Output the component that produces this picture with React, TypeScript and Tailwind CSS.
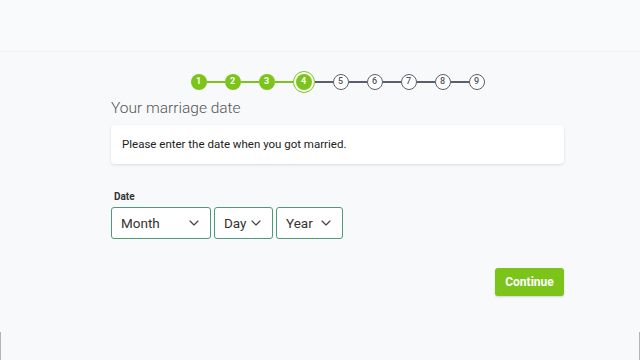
import { ChevronDown } from "lucide-react";

const steps = [1, 2, 3, 4, 5, 6, 7, 8, 9];
const current = 4;

const Step = ({ n }: { n: number }) => {
    if (n === current) {
        return (
            <div className="w-[22px] h-[22px] rounded-full border-[1.5px] border-[#7cc41a] bg-white flex items-center justify-center">
                <div className="w-[16px] h-[16px] rounded-full bg-[#7cc41a] text-white text-[9px] font-bold flex items-center justify-center">
                    {n}
                </div>
            </div>
        );
    }
    if (n < current) {
        return (
            <div className="w-[16px] h-[16px] rounded-full bg-[#7cc41a] text-white text-[9px] font-bold flex items-center justify-center">
                {n}
            </div>
        );
    }
    return (
        <div className="w-[16px] h-[16px] rounded-full border-[1.5px] border-[#5a5f6b] bg-white text-[#505661] text-[9px] font-medium flex items-center justify-center">
            {n}
        </div>
    );
};

const Select = ({ label, width }: { label: string; width: string }) => (
    <div
        className={`${width} h-[32px] border border-[#4e9a78] rounded-[3px] bg-white flex items-center justify-between pl-[9px] pr-[8px] text-[13.5px] text-[#333]`}
    >
        <span>{label}</span>
        <ChevronDown className="w-[16px] h-[16px] text-[#444]" strokeWidth={1.75} />
    </div>
);

export default function App() {
    return (
        <div className="w-[640px] h-[360px] overflow-hidden bg-[#f8f9fa] font-['Roboto',sans-serif]">
            <header className="h-[52px] bg-[#f9fafb] border-b border-[#f1f2f4]" />
            <main className="w-[454px] ml-[110px]">
                <div className="flex items-center justify-center mt-[19px] pl-[1px]">
                    {steps.map((n, i) => (
                        <div key={n} className="flex items-center">
                            <Step n={n} />
                            {i < steps.length - 1 && (
                                <div
                                    className={`w-[18px] h-[1.5px] ${n < current ? "bg-[#7cc41a]" : "bg-[#5a5f6b]"}`}
                                />
                            )}
                        </div>
                    ))}
                </div>
                <h1 className="mt-[5px] text-[15.5px] leading-[20px] font-light text-[#555] pl-[1px]">
                    Your marriage date
                </h1>
                <div className="mt-[7px] ml-[1px] h-[39px] bg-white rounded-[4px] shadow-[0_1px_3px_rgba(0,0,0,0.12)] flex items-center px-[11px] text-[11.5px] text-[#222]">
                    Please enter the date when you got married.
                </div>
                <div className="mt-[26px] ml-[4px] text-[10px] leading-[14px] font-bold text-[#333]">Date</div>
                <div className="mt-[3px] ml-[1px] flex gap-[3px]">
                    <Select label="Month" width="w-[100px]" />
                    <Select label="Day" width="w-[59px]" />
                    <Select label="Year" width="w-[67px]" />
                </div>
                <div className="mt-[29px] flex justify-end">
                    <button className="w-[69px] h-[28px] rounded-[3px] bg-[#7cc41a] text-white text-[12px] font-bold shadow-[0_1px_2px_rgba(0,0,0,0.15)]">
                        Continue
                    </button>
                </div>
            </main>
            <footer className="mt-[36px] h-[40px] border-l border-r border-[#b5b5b5] bg-[#f8f9fa]" />
        </div>
    );
}
